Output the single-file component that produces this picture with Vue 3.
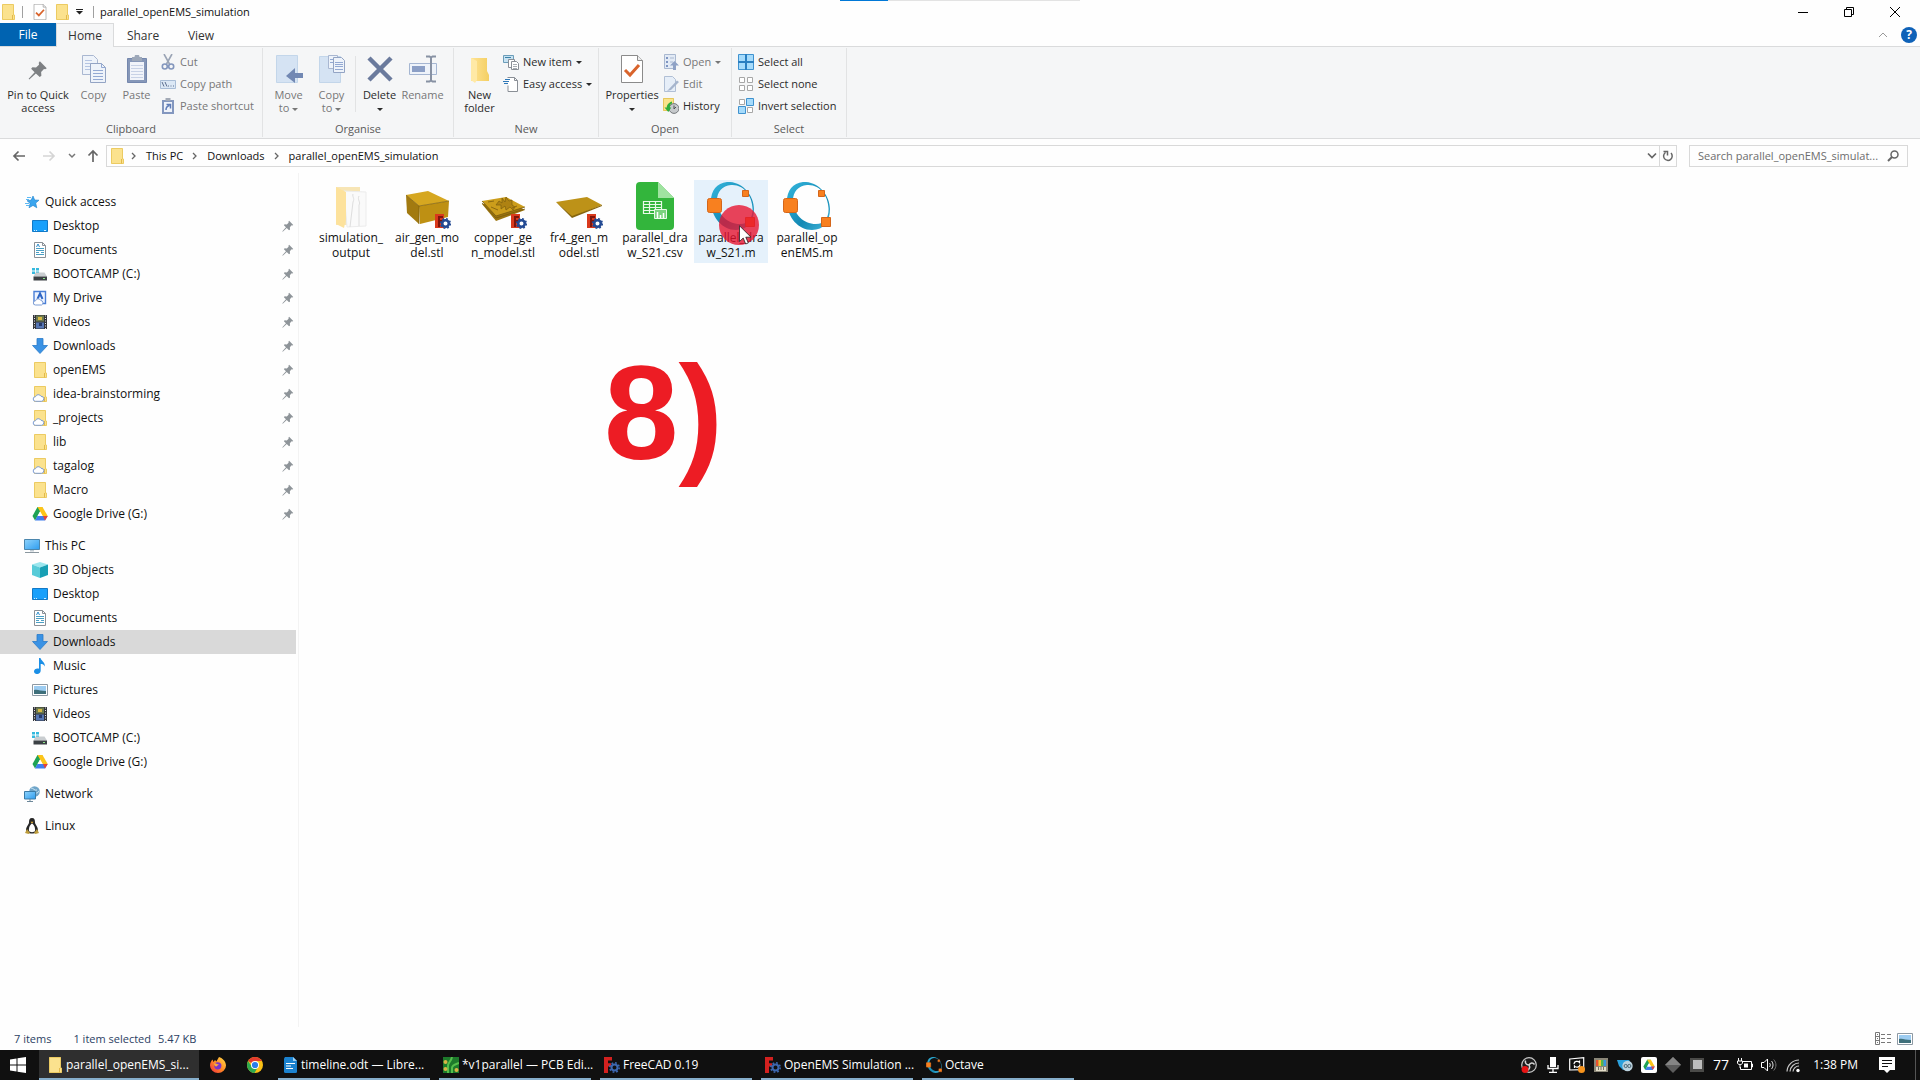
<script setup>
import { ref } from 'vue'

const folderName = 'parallel_openEMS_simulation'
const search = ref('')

const tabs = ['Home', 'Share', 'View']
const crumbs = ['This PC', 'Downloads', folderName]

const sections = [
  {
    label: 'Quick access',
    icon: 'star',
    pinned: true,
    items: [
      { label: 'Desktop', icon: 'desktop' },
      { label: 'Documents', icon: 'document' },
      { label: 'BOOTCAMP (C:)', icon: 'drive' },
      { label: 'My Drive', icon: 'mydrive' },
      { label: 'Videos', icon: 'video' },
      { label: 'Downloads', icon: 'download' },
      { label: 'openEMS', icon: 'folder' },
      { label: 'idea-brainstorming', icon: 'folder-cloud' },
      { label: '_projects', icon: 'folder-cloud' },
      { label: 'lib', icon: 'folder' },
      { label: 'tagalog', icon: 'folder-cloud' },
      { label: 'Macro', icon: 'folder' },
      { label: 'Google Drive (G:)', icon: 'gdrive' },
    ],
  },
  {
    label: 'This PC',
    icon: 'pc',
    items: [
      { label: '3D Objects', icon: 'cube' },
      { label: 'Desktop', icon: 'desktop' },
      { label: 'Documents', icon: 'document' },
      { label: 'Downloads', icon: 'download', active: true },
      { label: 'Music', icon: 'music' },
      { label: 'Pictures', icon: 'picture' },
      { label: 'Videos', icon: 'video' },
      { label: 'BOOTCAMP (C:)', icon: 'drive' },
      { label: 'Google Drive (G:)', icon: 'gdrive' },
    ],
  },
  { label: 'Network', icon: 'network', items: [] },
  { label: 'Linux', icon: 'linux', items: [] },
]

const files = [
  { lines: ['simulation_', 'output'], icon: 'folder-big' },
  { lines: ['air_gen_mo', 'del.stl'], icon: 'stl-box', badge: true },
  { lines: ['copper_ge', 'n_model.stl'], icon: 'stl-copper', badge: true },
  { lines: ['fr4_gen_m', 'odel.stl'], icon: 'stl-flat', badge: true },
  { lines: ['parallel_dra', 'w_S21.csv'], icon: 'csv' },
  { lines: ['parallel_dra', 'w_S21.m'], icon: 'octave', selected: true },
  { lines: ['parallel_op', 'enEMS.m'], icon: 'octave' },
]

const tasks = [
  { label: 'timeline.odt — Libre...', icon: 'writer' },
  { label: '*v1parallel — PCB Edi...', icon: 'pcb' },
  { label: 'FreeCAD 0.19', icon: 'freecad' },
  { label: 'OpenEMS Simulation ...', icon: 'freecad' },
  { label: 'Octave', icon: 'octave' },
]

const trayApps = ['obs', 'mic', 'sync', 'powertoys', 'arduino', 'drive-tile', 'diamond', 'chip']
const trayStatus = ['battery', 'volume', 'wifi']
</script>

<template>
  <div class="desktop">
    <svg class="sprite" aria-hidden="true">
      <defs>
        <linearGradient id="g-screen" x1="0" y1="0" x2="1" y2="1">
          <stop offset="0" stop-color="#8fd3fb" />
          <stop offset="1" stop-color="#2e9df0" />
        </linearGradient>
        <linearGradient id="g-octave" x1="0" y1="0" x2="1" y2="1">
          <stop offset="0" stop-color="#35b6dd" />
          <stop offset="0.6" stop-color="#1389b4" />
          <stop offset="1" stop-color="#45b9dc" />
        </linearGradient>
        <linearGradient id="g-folder" x1="0" y1="0" x2="1" y2="0">
          <stop offset="0" stop-color="#ffe394" />
          <stop offset="1" stop-color="#f4cf63" />
        </linearGradient>
        <linearGradient id="g-fox" x1="1" y1="0" x2="0" y2="1">
          <stop offset="0" stop-color="#ffe14a" />
          <stop offset="0.5" stop-color="#ff8a24" />
          <stop offset="1" stop-color="#f0293f" />
        </linearGradient>
      </defs>

      <!-- navigation pane -->
      <symbol id="i-folder" viewBox="0 0 16 16">
        <path d="M2 .5h12v11h1v4H2z" fill="#fbe28e" />
        <path d="M2.5.5h11v10.500h1v4.500h-12z" fill="none" stroke="#eccb62" />
        <path d="M12.500 11v4.500" stroke="#e3b94a" />
      </symbol>
      <symbol id="i-folder-cloud" viewBox="0 0 16 16">
        <use href="#i-folder" width="16" height="16" />
        <path d="M3.500 15.300a2.300 2.300 0 0 1 0-4.600 3 3 0 0 1 5.500-.4 2.500 2.500 0 0 1 .5 5z" fill="#fff" stroke="#7d9dd4" />
      </symbol>
      <symbol id="i-star" viewBox="0 0 16 16">
        <path d="M9 2l1.700 4 4.300.2-3.300 2.900 1.100 4.700L9 11.400l-4 2.400 1.100-4.500L3 6.700l4.200-.6z" fill="#3aa5ee" stroke="#1d82cc" stroke-width=".6" />
        <path d="M3 3.500h4M2 5.500h3M1 9.500h4M2 11.500h3" stroke="#5db9f3" />
      </symbol>
      <symbol id="i-desktop" viewBox="0 0 16 16">
        <path d="M.5 2.500h15v11H.5z" fill="#18a0fb" stroke="#1279c6" />
        <path d="M2 12.500h1M4 12.500h1M12 12.500h2" stroke="#d7efff" />
      </symbol>
      <symbol id="i-document" viewBox="0 0 16 16">
        <path d="M2.500.5h8l3 3v12h-11z" fill="#fff" stroke="#8a9097" />
        <path d="M10.500.5v3h3" fill="none" stroke="#8a9097" />
        <path d="M4 6.500h8M4 8.500h8M4 10.500h3M9 10.500h3M4 12.500h8" stroke="#4b9fc4" />
        <path d="M4.500 5l1.500-3 1.500 3" fill="none" stroke="#2f8ecb" />
      </symbol>
      <symbol id="i-drive" viewBox="0 0 16 16">
        <path d="M0 2h3v2.500H0zM4 2h3v2.500H4zM0 5.500h3V8H0zM4 5.500h3V8H4z" fill="#35b9de" />
        <path d="M3.500 6.500h9l2.500 4H1.500z" fill="#c9cdd0" />
        <path d="M1.500 10.500H15v4H1.500z" fill="#3c4145" />
        <path d="M11 12.500h2" stroke="#8ee68b" />
      </symbol>
      <symbol id="i-mydrive" viewBox="0 0 16 16">
        <path d="M2 1.500h11.500v12H2z" fill="#eef4ff" stroke="#4a7fd6" stroke-width="1.400" />
        <path d="M5.500 9L8 3.500 10.500 9" fill="none" stroke="#2f66c4" stroke-width="2" />
        <path d="M3.500 15a2 2 0 0 1 0-4.200 2.800 2.800 0 0 1 5.200-.4A2.400 2.400 0 0 1 9.500 15z" fill="#fff" stroke="#7d9dd4" />
      </symbol>
      <symbol id="i-video" viewBox="0 0 16 16">
        <path d="M1 1h14v14H1z" fill="#33353b" />
        <path d="M4 1.500h8v6H4z" fill="#6d7a4f" />
        <path d="M4 8.500h8v6H4z" fill="#5676b4" />
        <path d="M6 3h4v3H6z" fill="#d6b945" />
        <path d="M7 9h3v3H7z" fill="#263a6c" />
        <path d="M2.500 1.500v14M13.500 1.500v14" stroke="#e6e8eb" stroke-dasharray="1 1.500" />
      </symbol>
      <symbol id="i-download" viewBox="0 0 16 16">
        <path d="M5 .5h6v7h4.500L8 15.500.5 7.500H5z" fill="#3a92e4" stroke="#2a7bc9" stroke-width=".8" />
      </symbol>
      <symbol id="i-gdrive" viewBox="0 0 16 16">
        <path d="M5.500 1h5l-5 9.300L3 14.500.5 10z" fill="#1ea255" />
        <path d="M5.500 1h5l5.200 9h-5z" fill="#fcc419" />
        <path d="M5.400 10h10.300L13 14.500H3z" fill="#3f7fee" />
        <path d="M11 10h4.700L13 14.500z" fill="#ea4335" />
        <path d="M8 5.500L10.500 10h-5z" fill="#fff" />
      </symbol>
      <symbol id="i-pc" viewBox="0 0 16 16">
        <path d="M.5 1.500h15v10H.5z" fill="url(#g-screen)" stroke="#4b86ad" />
        <path d="M6 12h4v1.500H6z" fill="#c1cbd2" />
        <path d="M1 14.500h14" stroke="#8a979f" />
      </symbol>
      <symbol id="i-cube" viewBox="0 0 16 16">
        <path d="M8 0l8 2.500L8 5.500 0 2.500z" fill="#9be6ee" />
        <path d="M0 2.500l8 3V16l-8-3z" fill="#57cbd8" />
        <path d="M16 2.500l-8 3V16l8-3z" fill="#179fb4" />
      </symbol>
      <symbol id="i-music" viewBox="0 0 16 16">
        <path d="M7 0h1.500c.5 3 5 4 4.200 8.500C12 6.500 10.500 6 8.700 6v6.500C8.700 17 2 17 2 13.500c0-2.600 3-3.600 5-2.700z" fill="#1b8fe6" />
      </symbol>
      <symbol id="i-picture" viewBox="0 0 16 16">
        <path d="M.5 2.500h15v11H.5z" fill="#fff" stroke="#8d99a3" />
        <path d="M2 4h12v8H2z" fill="#9cccf1" />
        <path d="M2 8c4-1 6 1 12 1v3H2z" fill="#3e6f7a" />
      </symbol>
      <symbol id="i-network" viewBox="0 0 16 16">
        <circle cx="10.500" cy="5.500" r="5.300" fill="#6fa5c9" />
        <path d="M7 2c3 0 3 3 6 2M10 9c1-3 4-1 5-4" fill="none" stroke="#c9e4f4" />
        <path d="M.5 5.500h11v7.500H.5z" fill="url(#g-screen)" stroke="#3b7ba6" />
        <path d="M3 15.500h6M6 13v2" stroke="#6c8799" />
      </symbol>
      <symbol id="i-linux" viewBox="0 0 16 16">
        <path d="M8 0c2.500 0 3 2 3 4.500 0 2 3 4 3 8 0 2-3 3-6 3s-6-1-6-3c0-4 3-6 3-8C5 2 5.500 0 8 0z" fill="#262626" />
        <path d="M8 5.500c2 1 3.500 4.500 3 7.500-.5 1.500-5.500 1.500-6 0C4.500 10 6 6.500 8 5.500z" fill="#fff" />
        <path d="M6.500 3.800h3L8 5.600z" fill="#e9b23a" />
        <path d="M3 11l3 4-1.500 1L1 15zM13 11l-3 4 1.500 1L15 15z" fill="#bd9c3c" />
      </symbol>
      <symbol id="i-pin" viewBox="0 0 16 16">
        <path d="M9.500 1l5.500 5.500-1.200.8-1-.2-2.300 2.500.2 2.900-1.300 1L6.300 10.700 1 15.500l-.5-.5L5.300 9.700 2.500 7l1-1.300 2.900.3 2.400-2.300-.2-1.500z" />
      </symbol>

      <!-- ribbon -->
      <symbol id="i-copy" viewBox="0 0 28 28">
        <path d="M2.500.5h11l4 4v15h-15z" fill="#eef3fa" stroke="#a9b7d1" />
        <path d="M5 5.500h7M5 8.500h9M5 11.500h9M5 14.500h9" stroke="#b4c4e2" />
        <path d="M10.500 8.500h11l4 4v15h-15z" fill="#eef3fa" stroke="#93a4c4" />
        <path d="M21.500 8.500v4h4M13 15.500h10M13 18.500h10M13 21.500h10M13 24.500h10" fill="none" stroke="#93a9d3" />
      </symbol>
      <symbol id="i-paste" viewBox="0 0 28 28">
        <path d="M4.500 3.500h19v24h-19z" fill="#8697b8" stroke="#7487ad" />
        <path d="M7 7h14v18H7z" fill="#f1f4fa" />
        <path d="M9 2h2.500a2.500 2.500 0 0 1 5 0H19v4H9z" fill="#9da8b9" />
        <path d="M8 10.500h12M8 13.500h12M8 16.500h12M8 19.500h12M8 22.500h12" stroke="#c8d2e6" />
      </symbol>
      <symbol id="i-moveto" viewBox="0 0 28 28">
        <path d="M1.500.5h21v27h-21z" fill="#d5e3f3" stroke="#c3d6ea" />
        <path d="M28 18h-8v-5l-9 8 9 7v-5h8z" fill="#7288b3" />
      </symbol>
      <symbol id="i-copyto" viewBox="0 0 28 28">
        <path d="M1.500 1.500h21v26h-21z" fill="#d5e3f3" stroke="#c3d6ea" />
        <path d="M10.500.5h9v13h-9z" fill="#eef3fa" stroke="#a9b7d1" />
        <path d="M15.500 2.500h8l3 3v12h-11z" fill="#eef3fa" stroke="#93a4c4" />
        <path d="M17 7.500h8M17 9.500h8M17 11.500h8M17 14.500h8M12 4.500h3M12 7.500h3" stroke="#93a9d3" />
      </symbol>
      <symbol id="i-delete" viewBox="0 0 28 28">
        <path d="M3 3l22 22M25 3L3 25" stroke="#6a7a9c" stroke-width="4.500" />
      </symbol>
      <symbol id="i-rename" viewBox="0 0 28 28">
        <path d="M.5 8.500h27v11H.5z" fill="#eef3fa" stroke="#a5b6d2" />
        <path d="M3 11h13v6H3z" fill="#8b9fc6" />
        <path d="M17 1.500h3.500l1.500 1 1.500-1H27M22 2v24M17 26.500h3.500l1.500-1 1.500 1H27" fill="none" stroke="#8791a3" stroke-width="2" />
      </symbol>
      <symbol id="i-newfolder" viewBox="0 0 28 28">
        <path d="M5 3h16v13l2 4v6H5z" fill="url(#g-folder)" />
        <path d="M5 3l6 3v19l-2 3-4-3z" fill="#ffe9a6" />
      </symbol>
      <symbol id="i-properties" viewBox="0 0 28 28">
        <path d="M3.500.5h16l5 5v22h-21z" fill="#fff" stroke="#8b8b8b" />
        <path d="M19.500.5v5h5" fill="#eee" stroke="#8b8b8b" />
        <path d="M7 15l5 5 9-10" fill="none" stroke="#d9642c" stroke-width="3" />
      </symbol>
      <symbol id="i-cut" viewBox="0 0 16 16">
        <path d="M4 0l5.500 10M12 0L6.500 10" stroke="#9aa4b5" stroke-width="1.600" />
        <circle cx="4.800" cy="12.500" r="2.500" fill="none" stroke="#8396bd" stroke-width="1.600" />
        <circle cx="11.200" cy="12.500" r="2.500" fill="none" stroke="#8396bd" stroke-width="1.600" />
      </symbol>
      <symbol id="i-path" viewBox="0 0 16 16">
        <path d="M.5 4.500h15v8H.5z" fill="#dce8f5" stroke="#a9bdd6" />
        <path d="M2 6l2 4.500M5 6l2 4.500M8 10h1M10.500 10h1M13 10h1" stroke="#5d6f8f" />
      </symbol>
      <symbol id="i-shortcut" viewBox="0 0 16 16">
        <path d="M2 2h12v14H2z" fill="#8397bf" />
        <path d="M4 4h8v10H4z" fill="#eff3fa" />
        <path d="M5.500 0h5v3h-5z" fill="#a3aab6" />
        <path d="M6 12c0-3 1-4 3.500-4.500M6.500 6.500h4v4" fill="none" stroke="#5f7db8" stroke-width="1.500" />
      </symbol>
      <symbol id="i-newitem" viewBox="0 0 16 16">
        <path d="M.5 1.500h10v7H.5z" fill="#c7e2f2" stroke="#6b9db9" />
        <path d="M2 3.500h6" stroke="#3c82a8" />
        <path d="M5.500 5.500h6v8h-6z" fill="#fff" stroke="#8a8f96" />
        <path d="M8.500 7.500h5l2 2v6h-7z" fill="#fff" stroke="#8a8f96" />
        <path d="M10 10.500h4M10 12.500h4M10 14.500h4" stroke="#a8adb3" />
      </symbol>
      <symbol id="i-easy" viewBox="0 0 16 16">
        <path d="M4.500 1.500h7l3 3v11h-9.500v-6" fill="#fff" stroke="#8a8f96" />
        <path d="M11.500 1.500v3h3" fill="none" stroke="#8a8f96" />
        <path d="M2 3.500h5M0 5.500h6M1 7.500h4" stroke="#2e78b8" stroke-width="1.200" />
      </symbol>
      <symbol id="i-open" viewBox="0 0 16 16">
        <path d="M1.500.5h11v14h-11z" fill="#e2eaf5" stroke="#a9b8d0" />
        <path d="M3 3h2v2H3zM3 7h2v2H3zM3 11h2v2H3z" fill="#7e95c2" />
        <path d="M7 4h4M7 8h3" stroke="#a9b8d0" />
        <path d="M11.500 7L16 11.500h-3V16h-3v-4.500H7z" fill="#8ea1c5" />
      </symbol>
      <symbol id="i-edit" viewBox="0 0 16 16">
        <path d="M1.500.5h8l3 3v12h-11z" fill="#e6eef8" stroke="#b0bfd5" />
        <path d="M14 4.500l-8.500 9L4 15l4-1 8-8z" fill="#a6b5cd" />
      </symbol>
      <symbol id="i-history" viewBox="0 0 16 16">
        <path d="M0 0h11v13H0z" fill="#f9e38c" />
        <path d="M.5.5h10v12H.5z" fill="none" stroke="#e6c75c" />
        <circle cx="11" cy="10.500" r="4.900" fill="#c6c9cc" stroke="#75797d" />
        <path d="M11 7.500v3.500l2-2" fill="none" stroke="#4c4f53" />
        <path d="M9 3.500C5 5 3.800 7 3.800 9.500H1.500l3.800 4.500 3-4.500H6.800C6.800 7 7.500 6 9 5.500z" fill="#2fae3c" />
      </symbol>
      <symbol id="i-all" viewBox="0 0 16 16">
        <path d="M.5.5h15v15H.5z" fill="#a6dbfb" stroke="#3f92cf" />
        <path d="M8 0v16M0 8h16" stroke="#2a7fc1" stroke-width="2" />
      </symbol>
      <symbol id="i-none" viewBox="0 0 16 16">
        <path d="M1.500 1.500h5v5h-5zM9.500 1.500h5v5h-5zM1.500 9.500h5v5h-5zM9.500 9.500h5v5h-5z" fill="#fff" stroke="#a7a7a7" />
      </symbol>
      <symbol id="i-invert" viewBox="0 0 16 16">
        <path d="M1.500 1.500h5v5h-5zM9.500 9.500h5v5h-5z" fill="#fff" stroke="#a7a7a7" />
        <path d="M8.500.5h7v7h-7zM.5 8.500h7v7h-7z" fill="#a6dbfb" stroke="#3f92cf" />
      </symbol>

      <!-- file icons -->
      <symbol id="i-folder-big" viewBox="0 0 48 48">
        <path d="M9 5h24v38H9z" fill="#f7e5b5" />
        <path d="M17 9l22 1v34l-19 1z" fill="#fafafa" stroke="#ececec" />
        <path d="M26 12c-1 3 2 4 0 8l-3 25M32 14c-2 4 2 6 0 9v21" fill="none" stroke="#dedede" />
        <path d="M9 5l10 5v27l-2 9-8-4z" fill="#fde29c" />
      </symbol>
      <symbol id="i-stl-box" viewBox="0 0 48 48">
        <path d="M3 13l22-4 21 10-30 5z" fill="#d6a720" />
        <path d="M3 13l13 11v18L4 31z" fill="#a27a10" />
        <path d="M16 24l30-5-1 16-28 7z" fill="#be9013" />
        <path d="M3 13l13 11 30-5M16 24v18" fill="none" stroke="#7d5f0d" stroke-width=".7" />
      </symbol>
      <symbol id="i-stl-copper" viewBox="0 0 48 48">
        <path d="M3 22l24-4 19 10-29 11z" fill="#9c750f" />
        <path d="M3 19l24-4 19 10-29 9z" fill="#cc9d1b" />
        <path d="M3 19l14 15 29-9M3 21l14 15 29-9" fill="none" stroke="#785b0d" stroke-width=".8" />
        <path d="M17 23l3-4 3 2v-5l3 4 1-5 3 4 3-1v5l3 2-2 3-3-3-4 3-1-4-4 3v-4z" fill="#ae8212" stroke="#7c5e0e" stroke-width=".7" />
        <path d="M12 25l7 3M33 26l5-2M9 20l6-1" stroke="#8c6910" />
      </symbol>
      <symbol id="i-stl-flat" viewBox="0 0 48 48">
        <path d="M1 20l31-5 15 8-30 12z" fill="#bd9218" />
        <path d="M1 20l16 14 30-11v1L17 36z" fill="#85650d" />
      </symbol>
      <symbol id="i-csv" viewBox="0 0 48 48">
        <path d="M9 0h18l16 16v28a4 4 0 0 1-4 4H9a4 4 0 0 1-4-4V4a4 4 0 0 1 4-4z" fill="#33b53c" />
        <path d="M27 0l16 16H27z" fill="#9fe3a0" />
        <path d="M12.500 19.500h18v12h-18zM12.500 22.500h18M12.500 25.500h18M12.500 28.500h18M18.500 19.500v12M24.500 19.500v12" fill="none" stroke="#e8f9e8" stroke-width="1.200" />
        <path d="M23.500 27.500h12v9h-12z" fill="#7bd37f" stroke="#e8f9e8" />
        <path d="M26.500 36v-6M29.500 36v-3M32.500 36v-5" stroke="#fff" stroke-width="1.500" />
      </symbol>
      <symbol id="i-octave" viewBox="0 0 48 48">
        <path fill-rule="evenodd" d="M20 0C9 1 3 10 4 22c1 13 11 26 25 26 12 0 18-9 18-21C47 13 35-1 20 0zM24 3C37 2 45 14 45.500 26 46 35 42 42 33 42 20 42 11 32 10 20 9.500 10 15 4 24 3z" fill="url(#g-octave)" />
        <rect x=".5" y="16.500" width="14" height="14" rx="2" fill="#f8801f" stroke="#d4661a" />
        <path d="M35.500 8.500h6v6h-6zM38.500 35.500h9v9h-9z" fill="#f8801f" stroke="#d4661a" />
      </symbol>
      <symbol id="i-freecad" viewBox="0 0 16 16">
        <path d="M0 0h8v3.500H4v2.700h3v3.300H4V16H0z" fill="#d3211f" />
        <circle cx="10.500" cy="10.500" r="3" fill="none" stroke="#3d68b0" stroke-width="2" />
        <circle cx="10.500" cy="10.500" r="4.700" fill="none" stroke="#3d68b0" stroke-width="1.600" stroke-dasharray="1.800 1.891" />
      </symbol>
      <symbol id="i-badge" viewBox="0 0 16 16">
        <path d="M0 0h9v14H0z" fill="#d9391c" />
        <path d="M3 2h5v2H5v2h2.500v2H5v5H3z" fill="#7e150c" />
        <circle cx="10.500" cy="9.500" r="3.300" fill="#fff" stroke="#234a93" stroke-width="2.600" />
        <circle cx="10.500" cy="9.500" r="4.800" fill="none" stroke="#234a93" stroke-width="1.600" stroke-dasharray="1.900 1.870" />
      </symbol>

      <!-- taskbar -->
      <symbol id="i-windows" viewBox="0 0 16 16">
        <path d="M0 2.500l6.500-1v6H0zM7.500 1.300L16 0v7.500H7.500zM0 8.500h6.500v6l-6.500-1zM7.500 8.500H16V16l-8.500-1.300z" fill="#fff" />
      </symbol>
      <symbol id="i-firefox" viewBox="0 0 16 16">
        <path d="M9 0c3 1 7 4 7 8.500A8 7.500 0 0 1 0 8.500C0 6 1 4 2.500 2.500L3.500 5 5 3l1.500 1.500C7 3 8 2 9 0z" fill="url(#g-fox)" />
        <circle cx="7.800" cy="8.800" r="3.600" fill="#7a35c9" />
        <path d="M4 6.500c2-1 3 1 5 1-1 1-2 1-2.500 2-1 .5-2.500-1-2.500-3z" fill="#ffab33" />
      </symbol>
      <symbol id="i-chrome" viewBox="0 0 16 16">
        <circle cx="8" cy="8" r="8" fill="#fbc116" />
        <path d="M8 8L1.100 4A8 8 0 0 1 14.900 4H8z" fill="#e33b2e" />
        <path d="M1.100 4A8 8 0 0 0 7.500 16L11 10 5 10z" fill="#2da94f" />
        <circle cx="8" cy="8" r="4" fill="#fff" />
        <circle cx="8" cy="8" r="3.100" fill="#2b7de9" />
      </symbol>
      <symbol id="i-writer" viewBox="0 0 16 16">
        <path d="M3 0h8l4 4v10.500a1.500 1.500 0 0 1-1.500 1.500h-10A1.500 1.500 0 0 1 2 14.500V1.500z" fill="#1b82cf" />
        <path d="M11 0l4 4h-4z" fill="#9dd3f7" />
        <path d="M4 6.500h9M4 9h5M4 11.500h7" stroke="#fff" stroke-width="1.200" />
      </symbol>
      <symbol id="i-pcb" viewBox="0 0 16 16">
        <path d="M0 0h16v16H0z" fill="#1d7a2b" />
        <path d="M5 16V9c0-4 3-4 4-9M9 16v-5c0-3 4-4 7-5" fill="none" stroke="#56c04c" stroke-width="2" />
        <circle cx="2.500" cy="5" r="2" fill="#d8b445" />
        <circle cx="2.500" cy="12" r="2" fill="#d8b445" />
        <circle cx="13.500" cy="13" r="2" fill="#d8b445" />
      </symbol>
      <symbol id="i-obs" viewBox="0 0 16 16">
        <circle cx="8" cy="8" r="7.300" fill="#1c1c1c" stroke="#c9c9c9" stroke-width="1.200" />
        <path d="M8 8c-3 0-4-2-3.500-4.500M8 8c1.500-2.500 4-2.500 5.500-.5M8 8c1.500 2.500 0 4.500-2 5.500" fill="none" stroke="#d5d5d5" stroke-width="1.500" />
        <circle cx="4" cy="12.500" r="3.400" fill="#e81414" />
      </symbol>
      <symbol id="i-mic" viewBox="0 0 16 16">
        <path d="M5 0h6v10H5z" fill="#fff" />
        <path d="M3 8v3.500h10V8M8 12v3M4 15.300h8" fill="none" stroke="#fff" stroke-width="1.300" />
      </symbol>
      <symbol id="i-sync" viewBox="0 0 16 16">
        <path d="M.7 2l14-1.300v12L.7 13z" fill="none" stroke="#fff" stroke-width="1.200" />
        <path d="M5 7c0-3 4-3.500 5.500-1.500V3.500M11 7.500c0 3-4 3.500-5.500 1.500V11" fill="none" stroke="#fff" stroke-width="1.200" />
        <circle cx="12.500" cy="12.500" r="3.500" fill="#f7941d" />
      </symbol>
      <symbol id="i-powertoys" viewBox="0 0 16 16">
        <path d="M1 1h14v14H1z" fill="#8b8778" />
        <path d="M3 3h2.500v6H3z" fill="#e9512e" />
        <path d="M5.500 3H8v6H5.500z" fill="#f5c531" />
        <path d="M8 3h2.500v6H8z" fill="#55b848" />
        <path d="M10.500 3H13v6h-2.500z" fill="#3997dd" />
        <path d="M3 10h10v4H3z" fill="#e2ddc8" />
        <path d="M5.500 10v3M8 10v3M10.500 10v3" stroke="#77725f" />
      </symbol>
      <symbol id="i-arduino" viewBox="0 0 16 16">
        <path d="M0 3h12l2 3v4L6 13 2 9z" fill="#2ba0dc" />
        <circle cx="10.500" cy="9" r="5.200" fill="#bcd3df" />
        <circle cx="8.700" cy="9" r="1.600" fill="none" stroke="#4a6674" />
        <circle cx="12.300" cy="9" r="1.600" fill="none" stroke="#4a6674" />
      </symbol>
      <symbol id="i-drive-tile" viewBox="0 0 16 16">
        <rect width="16" height="16" rx="2" fill="#fff" />
        <use href="#i-gdrive" x="2" y="2" width="12" height="12" />
      </symbol>
      <symbol id="i-diamond" viewBox="0 0 16 16">
        <path d="M8 0l8 8-8 8-8-8z" fill="#5c5c5c" />
        <path d="M8 0l8 8H0z" fill="#858585" />
      </symbol>
      <symbol id="i-chip" viewBox="0 0 16 16">
        <path d="M1 1h14v14H1z" fill="#4a4a48" />
        <path d="M4 3h9v9H4z" fill="#bdbdbd" />
      </symbol>
      <symbol id="i-battery" viewBox="0 0 16 16">
        <path d="M6 4.500h8.500v8h-11V10M14.500 7h1v3h-1" fill="none" stroke="#fff" />
        <path d="M7 6.500h4v4H7z" fill="#fff" />
        <path d="M1.500 1v3M4.500 1v3M.5 4h5v2c0 2-5 2-5 0zM3 8v3" fill="none" stroke="#fff" />
      </symbol>
      <symbol id="i-volume" viewBox="0 0 16 16">
        <path d="M.5 5.500H3l3.500-3.500v12L3 10.500H.5z" fill="none" stroke="#fff" />
        <path d="M8.500 6c1 1.200 1 2.800 0 4M10.500 4c2 2.500 2 5.500 0 8" fill="none" stroke="#e0e0e0" />
        <path d="M12.700 2.500c3 3.500 3 7.500 0 11" fill="none" stroke="#777" />
      </symbol>
      <symbol id="i-wifi" viewBox="0 0 16 16">
        <path d="M2 14.500A12 12 0 0 1 14 3M5 14.500A9 9 0 0 1 14 6M8 14.500A6 6 0 0 1 14 9" fill="none" stroke="#c9c9c9" stroke-width="1.200" />
        <circle cx="13" cy="13.500" r="1.700" fill="#fff" />
      </symbol>
      <symbol id="i-note" viewBox="0 0 16 16">
        <path d="M0 0h16v13h-5l-3 3-3-3H0z" fill="#fff" />
        <path d="M3 3.500h10M3 6.500h10M3 9.500h6" stroke="#111" />
      </symbol>
    </svg>

    <div class="busy"></div>

    <header class="titlebar">
      <svg class="ico"><use href="#i-folder" /></svg>
      <span class="bar"></span>
      <button class="plain" aria-label="Properties"><svg class="ico"><use href="#i-properties" /></svg></button>
      <button class="plain" aria-label="New folder"><svg class="ico"><use href="#i-folder" /></svg></button>
      <button class="plain more" aria-label="Customise toolbar">
        <svg width="8" height="6" viewBox="0 0 8 6"><path d="M0 .5h7" stroke="#222" /><path d="M0 2h7L3.500 5.500z" fill="#222" /></svg>
      </button>
      <span class="bar"></span>
      <span class="title">{{ folderName }}</span>
      <div class="window-buttons">
        <button class="plain" aria-label="Minimise">
          <svg width="12" height="12" viewBox="0 0 12 12"><path d="M1 6.500h10" stroke="#000" /></svg>
        </button>
        <button class="plain" aria-label="Restore">
          <svg width="12" height="12" viewBox="0 0 12 12"><path d="M1.500 3.500h7v7h-7zM3.500 3V1.500h7v7H9" fill="none" stroke="#000" /></svg>
        </button>
        <button class="plain" aria-label="Close">
          <svg width="12" height="12" viewBox="0 0 12 12"><path d="M1 1l10 10M11 1L1 11" stroke="#000" /></svg>
        </button>
      </div>
    </header>

    <nav class="tabs">
      <button class="tab file">File</button>
      <button v-for="(tab, i) in tabs" :key="tab" class="tab" :class="{ current: i === 0 }">{{ tab }}</button>
      <div class="tabs-end">
        <button class="plain" aria-label="Minimise the ribbon">
          <svg width="10" height="6" viewBox="0 0 10 6"><path d="M1 5l4-4 4 4" fill="none" stroke="#999" /></svg>
        </button>
        <button class="plain help" aria-label="Help">?</button>
      </div>
    </nav>

    <section class="ribbon">
      <div class="group clipboard">
        <div class="tools">
          <button class="big wide"><svg class="large pin"><use href="#i-pin" /></svg>Pin to Quick<br />access</button>
          <button class="big off"><svg class="large"><use href="#i-copy" /></svg>Copy</button>
          <button class="big off"><svg class="large"><use href="#i-paste" /></svg>Paste</button>
          <div class="stack">
            <button class="small off"><svg class="ico"><use href="#i-cut" /></svg>Cut</button>
            <button class="small off"><svg class="ico"><use href="#i-path" /></svg>Copy path</button>
            <button class="small off"><svg class="ico"><use href="#i-shortcut" /></svg>Paste shortcut</button>
          </div>
        </div>
        <div class="caption">Clipboard</div>
      </div>
      <div class="group organise">
        <div class="tools">
          <button class="big off"><svg class="large"><use href="#i-moveto" /></svg>Move<br />to <i class="caret"></i></button>
          <button class="big off"><svg class="large"><use href="#i-copyto" /></svg>Copy<br />to <i class="caret"></i></button>
          <span class="divider"></span>
          <button class="big"><svg class="large"><use href="#i-delete" /></svg>Delete<br /><i class="caret"></i></button>
          <button class="big off"><svg class="large"><use href="#i-rename" /></svg>Rename</button>
        </div>
        <div class="caption">Organise</div>
      </div>
      <div class="group new">
        <div class="tools">
          <button class="big"><svg class="large"><use href="#i-newfolder" /></svg>New<br />folder</button>
          <div class="stack">
            <button class="small"><svg class="ico"><use href="#i-newitem" /></svg>New item <i class="caret"></i></button>
            <button class="small"><svg class="ico"><use href="#i-easy" /></svg>Easy access <i class="caret"></i></button>
          </div>
        </div>
        <div class="caption">New</div>
      </div>
      <div class="group open">
        <div class="tools">
          <button class="big mid"><svg class="large"><use href="#i-properties" /></svg>Properties<br /><i class="caret"></i></button>
          <div class="stack">
            <button class="small off"><svg class="ico"><use href="#i-open" /></svg>Open <i class="caret"></i></button>
            <button class="small off"><svg class="ico"><use href="#i-edit" /></svg>Edit</button>
            <button class="small"><svg class="ico"><use href="#i-history" /></svg>History</button>
          </div>
        </div>
        <div class="caption">Open</div>
      </div>
      <div class="group select">
        <div class="tools">
          <div class="stack">
            <button class="small"><svg class="ico"><use href="#i-all" /></svg>Select all</button>
            <button class="small"><svg class="ico"><use href="#i-none" /></svg>Select none</button>
            <button class="small"><svg class="ico"><use href="#i-invert" /></svg>Invert selection</button>
          </div>
        </div>
        <div class="caption">Select</div>
      </div>
    </section>

    <div class="address-row">
      <div class="arrows">
        <button class="plain" aria-label="Back">
          <svg width="14" height="12" viewBox="0 0 14 12"><path d="M13 6H2M6.500 1.500L2 6l4.500 4.500" fill="none" stroke="#666" stroke-width="1.700" /></svg>
        </button>
        <button class="plain" aria-label="Forward">
          <svg width="14" height="12" viewBox="0 0 14 12"><path d="M1 6h11M7.500 1.500L12 6l-4.500 4.500" fill="none" stroke="#d5d5d5" stroke-width="1.700" /></svg>
        </button>
        <button class="plain narrow" aria-label="Recent locations">
          <svg width="8" height="6" viewBox="0 0 8 6"><path d="M1 1l3 3 3-3" fill="none" stroke="#777" stroke-width="1.500" /></svg>
        </button>
        <button class="plain up" aria-label="Up">
          <svg width="12" height="14" viewBox="0 0 12 14"><path d="M6 13V2M1.500 6.500L6 2l4.500 4.500" fill="none" stroke="#666" stroke-width="1.700" /></svg>
        </button>
      </div>
      <div class="address">
        <svg class="ico"><use href="#i-folder" /></svg>
        <template v-for="crumb in crumbs" :key="crumb">
          <svg class="chev" width="6" height="8" viewBox="0 0 6 8"><path d="M1 1l3 3-3 3" fill="none" stroke="#666" stroke-width="1.300" /></svg>
          <a href="#">{{ crumb }}</a>
        </template>
        <button class="plain drop" aria-label="Previous locations">
          <svg width="10" height="8" viewBox="0 0 10 8"><path d="M1 1.500l4 4 4-4" fill="none" stroke="#666" stroke-width="1.700" /></svg>
        </button>
        <button class="plain refresh" aria-label="Refresh">
          <svg width="12" height="12" viewBox="0 0 12 12"><path d="M3.500 2.500a4.300 4.300 0 1 0 5.500.6M1.500 1.500h4v4" fill="none" stroke="#666" stroke-width="1.500" /></svg>
        </button>
      </div>
      <div class="search">
        <input v-model="search" type="text" aria-label="Search" placeholder="Search parallel_openEMS_simulat..." />
        <svg width="12" height="12" viewBox="0 0 12 12"><circle cx="7.500" cy="4.500" r="3.500" fill="none" stroke="#666" stroke-width="1.500" /><path d="M5 7l-4 4" stroke="#666" stroke-width="2" /></svg>
      </div>
    </div>

    <main class="content">
      <aside class="sidebar">
        <div v-for="section in sections" :key="section.label" class="section">
          <a href="#" class="row root"><svg class="ico"><use :href="'#i-' + section.icon" /></svg>{{ section.label }}</a>
          <a v-for="item in section.items" :key="item.label" href="#" class="row" :class="{ active: item.active }">
            <svg class="ico"><use :href="'#i-' + item.icon" /></svg>
            <span>{{ item.label }}</span>
            <svg v-if="section.pinned" class="pinned"><use href="#i-pin" /></svg>
          </a>
        </div>
      </aside>
      <div class="files">
        <button v-for="file in files" :key="file.lines.join('')" class="tile" :class="{ selected: file.selected }">
          <span class="thumb">
            <svg class="thumb-ico"><use :href="'#i-' + file.icon" /></svg>
            <svg v-if="file.badge" class="badge"><use href="#i-badge" /></svg>
          </span>
          <span v-for="line in file.lines" :key="line" class="line">{{ line }}</span>
        </button>
      </div>
    </main>

    <footer class="status">
      <span>7 items</span>
      <span class="picked">1 item selected</span>
      <span>5.47 KB</span>
      <div class="views">
        <button class="plain" aria-label="Details view">
          <svg width="17" height="13" viewBox="0 0 17 13"><path d="M.5.500h4v12h-4zM.5 4.500h4M.5 8.500h4" fill="none" stroke="#777" /><path d="M2 2.500h1M2 6.500h1M2 10.500h1M6 2.500h4M12 2.500h4M6 6.500h4M12 6.500h4M6 10.500h4M12 10.500h4" stroke="#777" /></svg>
        </button>
        <button class="plain" aria-label="Large icons view"><svg class="ico"><use href="#i-picture" /></svg></button>
      </div>
    </footer>

    <div class="taskbar">
      <button class="task start" aria-label="Start"><svg class="ico"><use href="#i-windows" /></svg></button>
      <button class="task running front"><svg class="ico"><use href="#i-folder" /></svg>parallel_openEMS_si...</button>
      <button class="task launcher" aria-label="Firefox"><svg class="ico"><use href="#i-firefox" /></svg></button>
      <button class="task launcher" aria-label="Chrome"><svg class="ico"><use href="#i-chrome" /></svg></button>
      <div class="task-list">
        <button v-for="task in tasks" :key="task.label" class="task running">
          <svg class="ico"><use :href="'#i-' + task.icon" /></svg>{{ task.label }}
        </button>
      </div>
      <div class="tray">
        <svg v-for="name in trayApps" :key="name" class="ico"><use :href="'#i-' + name" /></svg>
        <span class="temp">77</span>
        <svg v-for="name in trayStatus" :key="name" class="ico"><use :href="'#i-' + name" /></svg>
        <span class="clock">1:38 PM</span>
        <button class="plain notes" aria-label="Notifications"><svg class="ico"><use href="#i-note" /></svg></button>
      </div>
    </div>

    <!-- step number and click marker drawn over the window -->
    <div class="step">8)</div>
    <div class="click"></div>
    <svg class="pointer" width="13" height="20" viewBox="0 0 13 20">
      <path d="M.5.800v15.700l3.700-3.500 2.500 6 2.600-1.100-2.500-5.700h5.200z" fill="#fff" stroke="#222" stroke-width=".8" />
    </svg>
  </div>
</template>

<style>
body {
  margin: 0;
  background: #ffffff;
}
</style>

<style scoped>
.desktop {
  position: relative;
  display: flex;
  flex-direction: column;
  min-height: 100vh;
  overflow: hidden;
  background: #fefefe;
  color: #111111;
  font-family: 'Open Sans', 'Noto Sans', sans-serif;
  font-size: 12px;
  line-height: 16px;
}

.desktop * {
  box-sizing: border-box;
}

.sprite {
  position: absolute;
  width: 0;
  height: 0;
}

svg {
  flex: none;
}

.ico {
  width: 16px;
  height: 16px;
}

button,
input {
  border: 0;
  padding: 0;
  background: none;
  color: inherit;
  font: inherit;
}

a {
  color: inherit;
  text-decoration: none;
}

.plain {
  display: flex;
  align-items: center;
  justify-content: center;
}

.busy {
  position: absolute;
  top: 0;
  left: 840px;
  width: 240px;
  height: 1px;
  background: linear-gradient(to right, #0078d7 20%, #e3e3e3 20%);
}

/* title bar */
.titlebar {
  display: flex;
  align-items: center;
  height: 23px;
}

.bar {
  width: 1px;
  height: 12px;
  margin: 0 6px;
  background: #a0a0a0;
}

.titlebar .plain {
  width: 22px;
}

.titlebar .more {
  width: 14px;
}

.title {
  font-size: 11px;
}

.window-buttons {
  display: flex;
  margin-left: auto;
  padding-right: 2px;
}

.titlebar .window-buttons .plain {
  width: 46px;
  height: 20px;
}

/* tabs */
.tabs {
  display: flex;
  height: 24px;
  border-bottom: 1px solid #dadbdc;
}

.tab {
  width: 58px;
  height: 24px;
  border: 1px solid transparent;
  border-bottom: 0;
  color: #333333;
}

.file {
  width: 56px;
  height: 23px;
  background: #0063b1;
  color: #ffffff;
}

.current {
  background: #f5f6f7;
  border-color: #dadbdc;
}

.tabs-end {
  display: flex;
  gap: 13px;
  align-items: center;
  margin-left: auto;
  padding-right: 3px;
}

.help {
  width: 16px;
  height: 16px;
  border-radius: 50%;
  background: #0f62b8;
  color: #ffffff;
  font-weight: 700;
}

/* ribbon */
.ribbon {
  display: flex;
  height: 92px;
  padding: 1px 0;
  background: #f5f6f7;
  border-bottom: 1px solid #dadbdc;
}

.group {
  display: flex;
  flex-direction: column;
  justify-content: space-between;
  border-right: 1px solid #e2e3e4;
}

.clipboard {
  width: 263px;
}

.organise {
  width: 191px;
}

.new {
  width: 145px;
}

.open {
  width: 133px;
}

.select {
  width: 115px;
}

.tools {
  display: flex;
  align-items: flex-start;
  padding-left: 4px;
}

.big {
  display: block;
  width: 43px;
  padding-top: 7px;
  line-height: 13px;
  font-size: 11px;
  white-space: nowrap;
  text-align: center;
}

.wide {
  width: 68px;
}

.mid {
  width: 58px;
}

.large {
  display: block;
  width: 28px;
  height: 28px;
  margin: 0 auto 5px;
}

.pin {
  padding: 4px 4px 2px 4px;
  fill: #7d8083;
}

.big,
.small {
  color: #2b2b2b;
}

.off {
  color: #777777;
}

.stack {
  display: flex;
  flex-direction: column;
  padding: 3px 0 0 2px;
}

.small {
  display: flex;
  align-items: center;
  gap: 4px;
  height: 22px;
  font-size: 11px;
  white-space: nowrap;
}

.caret {
  display: inline-block;
  vertical-align: middle;
  border: 3px solid transparent;
  border-top-color: currentColor;
  border-bottom: 0;
}

.divider {
  width: 1px;
  height: 56px;
  margin: 8px 2px 0;
  background: #e2e3e4;
}

.caption {
  color: #5a5a5a;
  font-size: 11px;
  text-align: center;
}

/* address row */
.address-row {
  display: flex;
  align-items: center;
  height: 34px;
  padding: 0 12px 0 4px;
  font-size: 11px;
}

.arrows {
  display: flex;
  align-items: center;
  width: 102px;
}

.arrows .plain {
  width: 30px;
  height: 20px;
}

.arrows .narrow {
  width: 16px;
}

.arrows .up {
  width: 26px;
}

.address,
.search {
  display: flex;
  align-items: center;
  height: 22px;
  border: 1px solid #d9d9d9;
}

.address {
  flex: 1;
  padding-left: 2px;
}

.chev {
  margin: 0 9px;
}

.address .ico + .chev {
  margin-left: 6px;
}

.drop {
  width: 14px;
  height: 20px;
  margin-left: auto;
}

.refresh {
  width: 17px;
  height: 20px;
  border-left: 1px solid #d9d9d9;
}

.search {
  width: 219px;
  margin-left: 12px;
  padding: 0 8px;
}

.search input {
  flex: 1;
  min-width: 0;
  outline: none;
}

.search input::placeholder {
  color: #6d6d6d;
  opacity: 1;
}

/* content */
.content {
  display: flex;
  flex: 1;
}

.sidebar {
  width: 299px;
  padding: 17px 2px 0 0;
  border-right: 1px solid #f3f3f3;
}

.section {
  margin-bottom: 8px;
}

.row {
  display: flex;
  align-items: center;
  gap: 5px;
  height: 24px;
  padding: 0 2px 0 32px;
}

.root {
  padding-left: 24px;
}

.active {
  background: #d9d9d9;
}

.pinned {
  width: 12px;
  height: 12px;
  margin-left: auto;
  fill: #8e9499;
}

.files {
  display: flex;
  gap: 2px;
  align-items: flex-start;
  padding: 7px 0 0 15px;
}

.tile {
  display: flex;
  flex-direction: column;
  align-items: center;
  width: 74px;
  height: 83px;
  padding-top: 2px;
}

.selected {
  background: #e5f1fb;
}

.thumb {
  position: relative;
  width: 48px;
  height: 48px;
}

.thumb-ico {
  width: 48px;
  height: 48px;
}

.badge {
  position: absolute;
  right: 0;
  bottom: 0;
  width: 16px;
  height: 16px;
}

.line {
  line-height: 15px;
}

/* status bar */
.status {
  display: flex;
  align-items: center;
  height: 23px;
  padding: 0 7px 0 14px;
  color: #2c3e63;
  font-size: 11px;
}

.picked {
  margin: 0 7px 0 22px;
}

.views {
  display: flex;
  gap: 5px;
  margin-left: auto;
}

/* taskbar */
.taskbar {
  display: flex;
  height: 30px;
  background: #101010;
  color: #ffffff;
}

.task {
  display: flex;
  align-items: center;
  gap: 3px;
  border-top: 2px solid transparent;
  border-bottom: 2px solid transparent;
  white-space: nowrap;
}

.start {
  width: 39px;
  padding-left: 10px;
}

.running {
  width: 152px;
  padding-left: 4px;
  border-bottom-color: #86aecb;
}

.front {
  width: 160px;
  padding-left: 8px;
  background: #2f2f2f;
}

.launcher {
  justify-content: center;
  width: 37px;
}

.task-list {
  display: flex;
  gap: 9px;
  margin-left: 5px;
}

.tray {
  display: flex;
  align-items: center;
  gap: 8px;
  margin-left: auto;
  padding-right: 4px;
}

.temp {
  font-size: 14px;
}

.clock {
  margin-left: 4px;
}

.notes {
  width: 50px;
  height: 30px;
  padding-right: 7px;
  border-right: 1px solid #555555;
}

/* overlay */
.step {
  position: absolute;
  top: 336px;
  left: 604px;
  color: #ed1c24;
  font-family: 'Liberation Sans', Arial, sans-serif;
  font-size: 134px;
  font-weight: 700;
  line-height: 154px;
}

.click {
  position: absolute;
  top: 205px;
  left: 719px;
  width: 40px;
  height: 40px;
  border-radius: 50%;
  background: rgba(232, 17, 45, 0.78);
}

.pointer {
  position: absolute;
  top: 225px;
  left: 739px;
}
</style>
